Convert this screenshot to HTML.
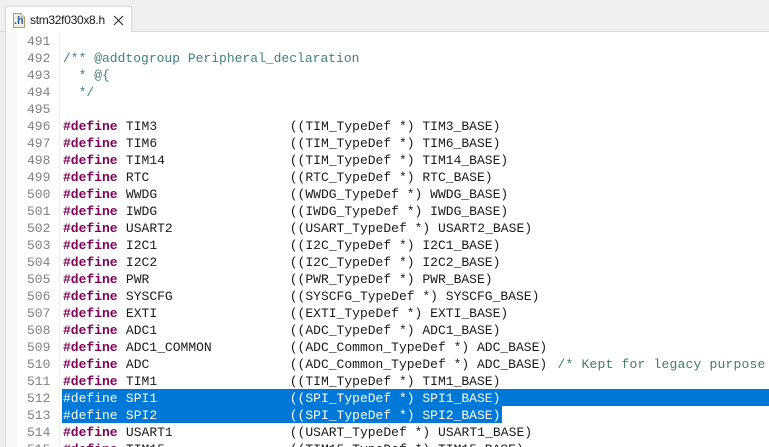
<!DOCTYPE html>
<html><head><meta charset="utf-8"><style>
html,body{margin:0;padding:0;background:#fff;overflow:hidden;width:769px;height:447px}
#w{position:absolute;left:0;top:0;width:769px;height:447px;overflow:hidden;background:#fff}
.a{position:absolute}
.l{position:absolute;left:63px;height:17px;font:13px/17px "Liberation Mono",monospace;white-space:pre;color:#1a1a1a}
.n{position:absolute;left:27px;font:13px/17px "Liberation Mono",monospace;color:#808080;white-space:pre}
.k{color:#7f0055;font-weight:bold;margin-right:.5px}
.c{color:#3f7f5f;margin-left:2.5px;letter-spacing:.2px}
.d{color:#3f7f7f}
.s,.s .k{color:#fff;font-weight:normal}
.u{letter-spacing:.05px}
</style></head><body><div id="w">
<div class="a" style="left:0;top:0;width:769px;height:32px;background:#f0f0f0"></div>
<div class="a" style="left:0;top:31px;width:769px;height:1px;background:#d9d9d9"></div>
<div class="a" style="left:0;top:32px;width:6px;height:415px;background:#f0f0f0"></div>
<div class="a" style="left:5px;top:32px;width:1px;height:415px;background:#d9d9d9"></div>
<div class="a" style="left:6px;top:32px;width:11px;height:415px;background:#f8f8f8"></div>
<div class="a" style="left:59px;top:32px;width:1px;height:415px;background:#efefef"></div>
<div class="a" style="left:5px;top:6px;width:127px;height:26px;background:#fff;border:1px solid #d9d9d9;border-bottom:0;box-sizing:border-box"></div>
<svg class="a" style="left:13px;top:13px" width="12" height="15" viewBox="0 0 12 15"><path d="M.5.5H8L11.500 4V14.500H.5Z" fill="#f4f1e4" stroke="#a89c6c"/><path d="M8 .5V4H11.500" fill="#fff" stroke="#a89c6c"/></svg>
<div class="a" style="left:14px;top:14px;font:bold 11px/14px 'Liberation Sans',sans-serif;color:#2d5f9a">.h</div>
<div class="a" style="left:30px;top:11px;font:12px/18px 'Liberation Sans',sans-serif;letter-spacing:-.3px;color:#1a1a1a;white-space:pre">stm32f030x8.h</div>
<svg class="a" style="left:113px;top:15px" width="11" height="11"><path d="M1 1L10 10M10 1L1 10" stroke="#222" stroke-width="1" fill="none"/></svg>
<div class="a" style="left:62px;top:389px;width:707px;height:17px;background:#0078d7"></div>
<div class="a" style="left:62px;top:406px;width:440px;height:17px;background:#0078d7"></div>

<div class="n" style="top:33px">491</div>
<div class="n" style="top:50px">492</div><div class="l" style="top:50px"><span class="d">/** @addtogroup Peripheral_declaration</span></div>
<div class="n" style="top:67px">493</div><div class="l" style="top:67px"><span class="d">  * @{</span></div>
<div class="n" style="top:84px">494</div><div class="l" style="top:84px"><span class="d">  */</span></div>
<div class="n" style="top:101px">495</div>
<div class="n" style="top:118px">496</div><div class="l" style="top:118px"><span class="k">#define</span> TIM3                 ((TIM_TypeDef *) TIM3_BASE)</div>
<div class="n" style="top:135px">497</div><div class="l" style="top:135px"><span class="k">#define</span> TIM6                 ((TIM_TypeDef *) TIM6_BASE)</div>
<div class="n" style="top:152px">498</div><div class="l" style="top:152px"><span class="k">#define</span> TIM14                ((TIM_TypeDef *) TIM14_BASE)</div>
<div class="n" style="top:169px">499</div><div class="l" style="top:169px"><span class="k">#define</span> RTC                  ((RTC_TypeDef *) RTC_BASE)</div>
<div class="n" style="top:186px">500</div><div class="l" style="top:186px"><span class="k">#define</span> WWDG                 ((WWDG_TypeDef *) WWDG_BASE)</div>
<div class="n" style="top:203px">501</div><div class="l" style="top:203px"><span class="k">#define</span> IWDG                 ((IWDG_TypeDef *) IWDG_BASE)</div>
<div class="n" style="top:220px">502</div><div class="l" style="top:220px"><span class="k">#define</span> USART2               ((USART_TypeDef *) <span class="u">USART2_BASE)</span></div>
<div class="n" style="top:237px">503</div><div class="l" style="top:237px"><span class="k">#define</span> I2C1                 ((I2C_TypeDef *) I2C1_BASE)</div>
<div class="n" style="top:254px">504</div><div class="l" style="top:254px"><span class="k">#define</span> I2C2                 ((I2C_TypeDef *) I2C2_BASE)</div>
<div class="n" style="top:271px">505</div><div class="l" style="top:271px"><span class="k">#define</span> PWR                  ((PWR_TypeDef *) PWR_BASE)</div>
<div class="n" style="top:288px">506</div><div class="l" style="top:288px"><span class="k">#define</span> SYSCFG               ((SYSCFG_TypeDef *) SYSCFG_BASE)</div>
<div class="n" style="top:305px">507</div><div class="l" style="top:305px"><span class="k">#define</span> EXTI                 ((EXTI_TypeDef *) EXTI_BASE)</div>
<div class="n" style="top:322px">508</div><div class="l" style="top:322px"><span class="k">#define</span> ADC1                 ((ADC_TypeDef *) ADC1_BASE)</div>
<div class="n" style="top:339px">509</div><div class="l" style="top:339px"><span class="k">#define</span> ADC1_COMMON          ((ADC_Common_TypeDef *) ADC_BASE)</div>
<div class="n" style="top:356px">510</div><div class="l" style="top:356px"><span class="k">#define</span> ADC                  ((ADC_Common_TypeDef *) ADC_BASE) <span class="c">/* Kept for legacy purpose */</span></div>
<div class="n" style="top:373px">511</div><div class="l" style="top:373px"><span class="k">#define</span> TIM1                 ((TIM_TypeDef *) TIM1_BASE)</div>
<div class="n" style="top:390px">512</div><div class="l s" style="top:390px"><span class="k">#define</span> SPI1                 ((SPI_TypeDef *) SPI1_BASE)</div>
<div class="n" style="top:407px">513</div><div class="l s" style="top:407px"><span class="k">#define</span> SPI2                 ((SPI_TypeDef *) SPI2_BASE)</div>
<div class="n" style="top:424px">514</div><div class="l" style="top:424px"><span class="k">#define</span> USART1               ((USART_TypeDef *) <span class="u">USART1_BASE)</span></div>
<div class="n" style="top:441px">515</div><div class="l" style="top:441px"><span class="k">#define</span> TIM15                ((TIM15_TypeDef *) TIM15_BASE)</div>
</div></body></html>
